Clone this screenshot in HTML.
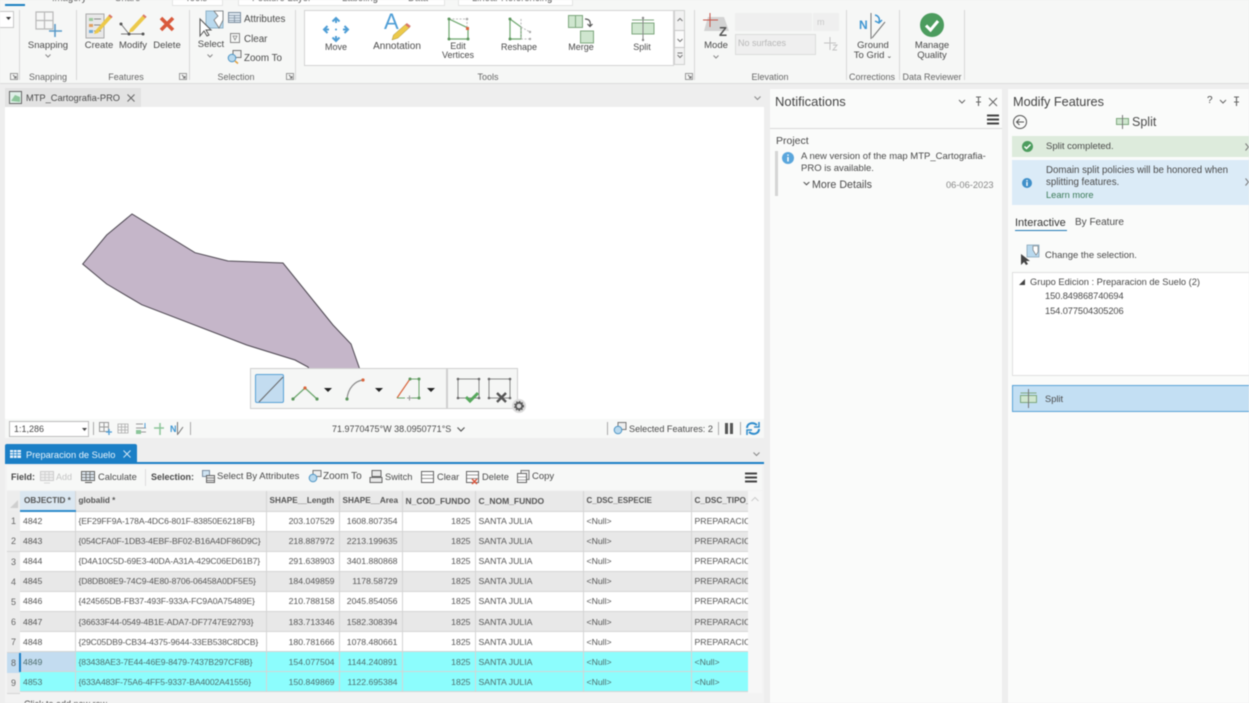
<!DOCTYPE html>
<html><head><meta charset="utf-8"><style>
html,body{margin:0;padding:0;width:1249px;height:703px;overflow:hidden;background:#eee}
#r{position:relative;width:1249px;height:703px;overflow:hidden;font-family:"Liberation Sans",sans-serif;font-size:9.5px;color:#4a4a4a;filter:blur(.45px);background:#eeeeee}
.a{position:absolute}
.t{position:absolute;white-space:nowrap;line-height:12px}
.c{transform:translateX(-50%);text-align:center}
.g{color:#666}
svg{position:absolute;overflow:visible}
.sep{position:absolute;width:1px;background:#d8d8d8}
table{position:absolute;border-collapse:collapse;table-layout:fixed;left:20px;top:491px;width:728px;font-size:8.7px;color:#555}
td,th{padding:0 3px;height:20.1px;box-sizing:border-box;white-space:nowrap;overflow:hidden;border-bottom:1px solid #d5d5d5;border-right:1px solid #d5d5d5;text-align:left;font-weight:normal}
th{background:#e9e9e9;height:20px;font-weight:bold;color:#555;font-size:8.2px}
td.n{text-align:right;padding-right:4px}
tr:nth-child(even) td{background:#ffffff}
tr:nth-child(odd) td{background:#e8e8e8}
tr.s td{background:#8cfdfd!important;color:#4e6e6e}
.gid{font-size:8.6px;letter-spacing:-.1px}
.rh{position:absolute;left:7px;width:13px;height:20px;text-align:center;line-height:20px;font-size:9px;color:#666;background:#ececec;border-bottom:1px solid #d5d5d5}
</style></head><body><div id="r">

<!-- ribbon -->
<div class="a" style="left:0;top:0;width:1249px;height:83px;background:#f6f7f6"></div>
<div class="a" style="left:0;top:83px;width:1249px;height:1px;background:#dcdcdc"></div>
<div class="a" style="left:172px;top:0;width:49px;height:5px;background:#fff;border:1px solid #e4e4e4;border-top:0"></div>
<div class="a" style="left:238px;top:0;width:205px;height:5px;background:#fff;border:1px solid #e4e4e4;border-top:0"></div>
<div class="a" style="left:458px;top:0;width:113px;height:5px;background:#fff;border:1px solid #e4e4e4;border-top:0"></div>
<div class="a" style="left:5px;top:4px;width:20px;height:2px;background:#1b7fc0"></div>
<div class="t" style="left:52px;top:-7px">Imagery</div><div class="t" style="left:115px;top:-7px">Share</div><div class="t" style="left:185px;top:-7px">Tools</div><div class="t" style="left:252px;top:-7px">Feature Layer</div><div class="t" style="left:342px;top:-7px">Labeling</div><div class="t" style="left:408px;top:-7px">Data</div><div class="t" style="left:472px;top:-7px">Linear Referencing</div>

<div class="a" style="left:-2px;top:11px;width:14px;height:15px;background:#fff;border:1px solid #c8c8c8"></div>
<svg style="left:6px;top:17px" width="5" height="3"><path d="M0 0h5L2.500 3z" fill="#333"/></svg>

<div class="sep" style="left:19px;top:10px;height:70px"></div>
<div class="sep" style="left:76px;top:10px;height:70px"></div>
<div class="sep" style="left:189px;top:10px;height:70px"></div>
<div class="sep" style="left:295px;top:10px;height:70px"></div>
<div class="sep" style="left:694px;top:10px;height:70px"></div>
<div class="sep" style="left:846px;top:10px;height:70px"></div>
<div class="sep" style="left:899px;top:10px;height:70px"></div>
<div class="sep" style="left:964px;top:10px;height:70px"></div>

<!-- Snapping -->
<svg style="left:35px;top:11px" width="28" height="26" fill="none"><path d="M1 1h17v17H1zM1 9.500h17M9.500 1v17" stroke="#b9b9b9" stroke-width="1.200"/><path d="M20 13v13M14 20h13" stroke="#5b9bc9" stroke-width="1.600"/></svg>
<div class="t c" style="left:48px;top:40px">Snapping</div>
<svg style="left:45px;top:54px" width="6" height="4" fill="none"><path d="M.5.500L3 3l2.500-2.500" stroke="#888"/></svg>
<div class="t c g" style="left:48px;top:71px;font-size:9px">Snapping</div>
<svg style="left:10px;top:73px" width="8" height="7" fill="none"><path d="M.5.500h7v6h-7z" stroke="#999"/><path d="M3 2l3 3M6 3v2H4" stroke="#777"/></svg>

<!-- Features -->
<svg style="left:85px;top:12px" width="28" height="26"><rect x="1" y="2" width="18" height="24" fill="#e8e8e8" stroke="#aaa"/><rect x="4" y="6" width="4" height="3" fill="#9cc89c"/><rect x="4" y="12" width="4" height="3" fill="#e0a060"/><rect x="4" y="18" width="4" height="3" fill="#6fa9d6"/><path d="M9 7h7M9 13h7M9 19h7" stroke="#888"/><path d="M10 19L24 3l3 2.500L13 21l-4 1z" fill="#ecc94a"/><path d="M24 3l3 2.500" stroke="#d9776a" stroke-width="2"/></svg>
<div class="t c" style="left:99px;top:40px">Create</div>
<svg style="left:119px;top:12px" width="28" height="24" fill="none"><path d="M2 12l8 10M2 22h22" stroke="#777"/><circle cx="2" cy="12" r="1.500" fill="#555"/><circle cx="10" cy="22" r="1.500" fill="#555"/><circle cx="24" cy="22" r="1.500" fill="#555"/><path d="M11 17L24 3l3 2.500L14 19.500l-4 1z" fill="#ecc94a"/><path d="M24 3l3 2.500" stroke="#d9776a" stroke-width="2"/></svg>
<div class="t c" style="left:133px;top:40px">Modify</div>
<svg style="left:159px;top:16px" width="16" height="16" fill="none"><path d="M2 2l12 12M14 2L2 14" stroke="#d95a3c" stroke-width="3.600"/></svg>
<div class="t c" style="left:167px;top:40px">Delete</div>
<div class="t c g" style="left:126px;top:71px;font-size:9px">Features</div>
<svg style="left:179px;top:73px" width="8" height="7" fill="none"><path d="M.5.500h7v6h-7z" stroke="#999"/><path d="M3 2l3 3M6 3v2H4" stroke="#777"/></svg>

<!-- Selection -->
<svg style="left:199px;top:10px" width="26" height="27"><rect x="7" y="1" width="17" height="17" fill="#b9d9ee" stroke="#8fb2c8"/><path d="M15 1h9v9l-4 8-5-8 4-4z" fill="#fff" stroke="#777" stroke-width=".8"/><path d="M1 9v17l4-5 3 5 2-1-3-5h5z" fill="#fff" stroke="#555"/></svg>
<div class="t c" style="left:211px;top:39px">Select</div>
<svg style="left:207px;top:54px" width="6" height="4" fill="none"><path d="M.5.500L3 3l2.500-2.500" stroke="#888"/></svg>
<svg style="left:228px;top:12px" width="13" height="11"><rect x=".5" y=".5" width="12" height="10" fill="#dfe9f1" stroke="#7d8ea0"/><path d="M1 3.500h11M1 6h11M1 8.500h11M6.500 3v7" stroke="#7d8ea0" stroke-width=".8"/></svg>
<div class="t" style="left:244px;top:14px;font-size:9.800px">Attributes</div>
<svg style="left:230px;top:33px" width="10" height="10" fill="none"><path d="M.5.500h9v9h-9z" stroke="#888"/><path d="M3 3h4L5 7z" stroke="#888" stroke-width=".8"/></svg>
<div class="t" style="left:244px;top:34px;font-size:9.800px">Clear</div>
<svg style="left:227px;top:50px" width="15" height="14" fill="none"><rect x="6" y=".5" width="8" height="7" fill="#eee" stroke="#777"/><circle cx="5" cy="8" r="3.800" fill="#b9d9ee" stroke="#4d94c4"/><path d="M8 11l3 2.500" stroke="#e0a040" stroke-width="1.500"/></svg>
<div class="t" style="left:244px;top:53px;font-size:9.800px">Zoom To</div>
<div class="t c g" style="left:236px;top:71px;font-size:9px">Selection</div>
<svg style="left:286px;top:73px" width="8" height="7" fill="none"><path d="M.5.500h7v6h-7z" stroke="#999"/><path d="M3 2l3 3M6 3v2H4" stroke="#777"/></svg>

<!-- Tools gallery -->
<div class="a" style="left:304px;top:10px;width:368px;height:54px;background:#fff;border:1px solid #d4d4d4"></div>
<svg style="left:323px;top:17px" width="26" height="25" fill="none" stroke="#4f9ed6" stroke-width="2"><path d="M13 1v5M13 19v5M1 12.500h5M20 12.500h5"/><path d="M9.500 4.500L13 1l3.500 3.500M9.500 20.500L13 24l3.500-3.500M4.500 9L1 12.500 4.500 16M21.500 9l3.500 3.500L21.500 16"/><path d="M12 12.500h2M13 11.500v2" stroke-width="1"/></svg>
<div class="t c" style="left:336px;top:41px;font-size:9px">Move</div>
<div class="t" style="left:384px;top:10px;font-size:22px;line-height:24px;color:#4f9ed6">A</div>
<svg style="left:391px;top:23px" width="20" height="18"><path d="M1 17l1.500-5L15 1l4 3L7 15z" fill="#ecc94a" stroke="#a58f3a" stroke-width=".5"/><path d="M15 1l4 3" stroke="#d9776a" stroke-width="2.500"/></svg>
<div class="t c" style="left:397px;top:41px;font-size:10px">Annotation</div>
<svg style="left:447px;top:17px" width="23" height="23" fill="none"><path d="M2 2v20h19V11z" stroke="#6ca66c" stroke-width="1.200"/><path d="M2 2h18v9" stroke="#aaa" stroke-dasharray="2 1.500" stroke-width=".8"/><circle cx="2" cy="2" r="1.500" fill="#5d965d"/><circle cx="20" cy="2" r="1.300" fill="#aaa"/><rect x="19" y="10" width="3" height="3" fill="#d9653c"/><circle cx="2" cy="22" r="1.500" fill="#5d965d"/><circle cx="21" cy="22" r="1.500" fill="#5d965d"/></svg>
<div class="t c" style="left:458px;top:42px;font-size:9px;line-height:9px">Edit<br>Vertices</div>
<svg style="left:509px;top:18px" width="24" height="22" fill="none"><path d="M1 1l11 8v12H1z" stroke="#6ca66c" stroke-width="1.200"/><path d="M12 9l9 5M12 21h10M12 1v20" stroke="#aaa" stroke-dasharray="2 1.500" stroke-width=".8"/><circle cx="1" cy="1" r="1.500" fill="#5d965d"/><circle cx="1" cy="21" r="1.500" fill="#5d965d"/><circle cx="21" cy="14" r="1.200" fill="#aaa"/><circle cx="21" cy="21" r="1.200" fill="#aaa"/></svg>
<div class="t c" style="left:519px;top:41px;font-size:9px">Reshape</div>
<svg style="left:568px;top:15px" width="27" height="27" fill="none"><rect x=".5" y=".5" width="14" height="12" fill="#cfe6cf" stroke="#7fa87f"/><path d="M7.500 1v12" stroke="#7fa87f"/><rect x="12.500" y="16" width="13" height="12" fill="#cfe6cf" stroke="#7fa87f"/><path d="M17 4c4 0 6 2 5 7M19.500 9l2.500 2.500 2.500-2.500" stroke="#555" stroke-width="1.200"/></svg>
<div class="t c" style="left:581px;top:41px;font-size:9px">Merge</div>
<svg style="left:631px;top:17px" width="23" height="24" fill="none"><rect x="1" y="6" width="22" height="11" fill="#cfe6cf" stroke="#7fa87f"/><path d="M1 3h22M12 1v22" stroke="#7fa87f"/><path d="M12 1v22" stroke="#888"/><circle cx="12" cy="1" r="1.200" fill="#888"/><circle cx="12" cy="23" r="1.200" fill="#888"/></svg>
<div class="t c" style="left:642px;top:41px;font-size:9px">Split</div>
<div class="a" style="left:674px;top:10px;width:11px;height:55px;background:#f2f2f2;border:1px solid #d0d0d0;box-sizing:border-box"></div>
<div class="a" style="left:674px;top:30px;width:11px;height:18px;background:#fbfbfb;border:1px solid #c8c8c8;box-sizing:border-box"></div>
<svg style="left:677px;top:18px" width="6" height="40" fill="none" stroke="#777"><path d="M.5 3L3 .5 5.500 3M.5 21L3 23.500 5.500 21M.5 35h5M.5 37L3 39.500 5.500 37"/></svg>
<div class="t c g" style="left:488px;top:71px;font-size:9px">Tools</div>
<svg style="left:685px;top:73px" width="8" height="7" fill="none"><path d="M.5.500h7v6h-7z" stroke="#999"/><path d="M3 2l3 3M6 3v2H4" stroke="#777"/></svg>

<!-- Elevation -->
<svg style="left:702px;top:13px" width="28" height="26"><path d="M6 4h16l5 14H2z" fill="#d3d3d3"/><path d="M1 7h15M8 0v14" stroke="#c7564a"/></svg>
<div class="t" style="left:719px;top:26px;font-size:13px;font-weight:bold;color:#555">Z</div>
<div class="t c" style="left:716px;top:40px">Mode</div>
<svg style="left:713px;top:55px" width="6" height="4" fill="none"><path d="M.5.500L3 3l2.500-2.500" stroke="#888"/></svg>
<div class="a" style="left:735px;top:13px;width:77px;height:18px;background:#efefef"></div>
<div class="a" style="left:813px;top:13px;width:26px;height:18px;background:#efefef"></div>
<div class="t" style="left:817px;top:16px;color:#c8c8c8;font-size:9px">m</div>
<div class="a" style="left:735px;top:34px;width:79px;height:19px;background:#efefef;border:1px solid #dcdcdc"></div>
<div class="t" style="left:738px;top:37px;color:#b8b8b8;font-size:9px">No surfaces</div>
<svg style="left:824px;top:36px" width="14" height="16" fill="none" stroke="#c2c2c2"><path d="M6 1v13M0 7h12M9 9h4l-4 5h4"/></svg>
<div class="t c g" style="left:770px;top:71px;font-size:9px">Elevation</div>

<!-- Corrections -->
<div class="t" style="left:859px;top:19px;font-size:12px;font-weight:bold;color:#3e96d2">N</div>
<svg style="left:870px;top:12px" width="17" height="28" fill="none"><path d="M1 1v26M2 26L15 10" stroke="#777"/><path d="M5 3c4 1 5 4 4 7M5 9l4 2 3-3" stroke="#3e96d2" stroke-width="1.500"/></svg>
<div class="t c" style="left:873px;top:40px;line-height:10px;padding-top:1px">Ground<br>To Grid<span style="font-size:7px"> ⌄</span></div>
<div class="t c g" style="left:872px;top:71px;font-size:9px">Corrections</div>

<!-- Data Reviewer -->
<svg style="left:920px;top:13px" width="24" height="24" fill="none"><circle cx="12" cy="12" r="12" fill="#4c9c5e"/><path d="M6 12.500l4.500 4.500L18 8" stroke="#fff" stroke-width="3"/></svg>
<div class="t c" style="left:932px;top:41px;line-height:10px">Manage<br>Quality</div>
<div class="t c g" style="left:932px;top:71px;font-size:9px">Data Reviewer</div>

<!-- Map pane -->
<div class="a" style="left:5px;top:88px;width:136px;height:19px;background:#e2e2e2"></div>
<svg style="left:9px;top:91px" width="13" height="13"><rect x=".5" y=".5" width="12" height="12" fill="#dff0e8" stroke="#666"/><path d="M2 10l4-6 5 2v5z" fill="#8cc59a"/></svg>
<div class="t" style="left:26px;top:92px;font-size:9.300px">MTP_Cartografia-PRO</div>
<svg style="left:127px;top:94px" width="8" height="8" fill="none" stroke="#666"><path d="M.5.500l7 7M7.500.500l-7 7"/></svg>
<svg style="left:754px;top:96px" width="7" height="4" fill="none" stroke="#888"><path d="M.5.500L3.500 3.500 6.500.500"/></svg>
<div class="a" style="left:5px;top:107px;width:759px;height:331px;background:#fff"></div>
<svg style="left:0;top:0" width="770" height="420"><path d="M132 214L106.700 235 82.700 264 106.700 284 141.700 304.700 246.700 345 295 360 308 367 318 385H365L359 367 351 344 333 325 283 263 228 261 195 252.700Z" fill="#c5b6c9" stroke="#4c4650" stroke-width="1"/></svg>

<!-- floating toolbar -->
<div class="a" style="left:250px;top:368px;width:268px;height:41px;background:#f5f6f5;border:1px solid #cfcfcf;box-sizing:border-box"></div>
<div class="a" style="left:446px;top:369px;width:2px;height:39px;background:#cfcfcf"></div>
<div class="a" style="left:255px;top:374px;width:29px;height:29px;background:#c3dcf0;border:1px solid #5aa2d6;border-radius:2px;box-sizing:border-box"></div>
<svg style="left:250px;top:368px" width="270" height="42" fill="none">
<path d="M9 34L33 9" stroke="#666" stroke-width="1"/>
<path d="M43 31L55 20 67 31" stroke="#6ca66c" stroke-width="1.200"/><circle cx="43" cy="31" r="1.600" fill="#5d965d"/><circle cx="67" cy="31" r="1.600" fill="#5d965d"/><circle cx="55" cy="20" r="1.600" fill="#d9653c"/>
<path d="M74 20h8l-4 4z" fill="#222"/>
<path d="M97 31C98 20 105 13 113 12" stroke="#888" stroke-width="1.200"/><circle cx="97" cy="31" r="1.600" fill="#5d965d"/><circle cx="113" cy="12" r="1.600" fill="#d9653c"/>
<path d="M125 20h8l-4 4z" fill="#222"/>
<path d="M147 30L160 11" stroke="#d9653c" stroke-width="1.200"/><path d="M147 30h8M160 11h9v19h-8" stroke="#6ca66c"/><path d="M157 30h5M159.500 27.500v5" stroke="#999"/><circle cx="160" cy="11" r="1.500" fill="#5d965d"/><circle cx="169" cy="11" r="1.500" fill="#5d965d"/><circle cx="169" cy="30" r="1.500" fill="#5d965d"/>
<path d="M177 20h8l-4 4z" fill="#222"/>
<path d="M208 11h21v19h-21z" stroke="#888"/><circle cx="208" cy="11" r="1.300" fill="#666"/><circle cx="229" cy="11" r="1.300" fill="#666"/><circle cx="208" cy="30" r="1.300" fill="#666"/><circle cx="229" cy="30" r="1.300" fill="#666"/>
<path d="M216 29l4 4 8-8" stroke="#56a85c" stroke-width="3"/>
<path d="M239 11h21v19h-21z" stroke="#888"/><circle cx="239" cy="11" r="1.300" fill="#666"/><circle cx="260" cy="11" r="1.300" fill="#666"/><circle cx="239" cy="30" r="1.300" fill="#666"/><circle cx="260" cy="30" r="1.300" fill="#666"/>
<path d="M247 25l9 9M256 25l-9 9" stroke="#555" stroke-width="2.400"/>
</svg>
<svg style="left:512px;top:399px" width="14" height="14"><circle cx="7" cy="7" r="7" fill="#dadada"/><circle cx="7" cy="7" r="3.200" fill="none" stroke="#555" stroke-width="1.800"/><circle cx="7" cy="7" r="4.500" fill="none" stroke="#555" stroke-width="1" stroke-dasharray="1.500 1.500"/></svg>

<!-- Map status bar -->
<div class="a" style="left:5px;top:419px;width:759px;height:19px;background:#f7f8f7"></div>
<div class="a" style="left:9px;top:421px;width:80px;height:16px;background:#fff;border:1px solid #bbb;box-sizing:border-box"></div>
<div class="t" style="left:14px;top:423px;font-size:9px">1:1,286</div>
<svg style="left:82px;top:428px" width="5" height="3"><path d="M0 0h5L2.500 3z" fill="#444"/></svg>
<div class="a" style="left:93px;top:422px;width:1px;height:13px;background:#aaa"></div>
<svg style="left:99px;top:422px" width="90" height="14" fill="none"><path d="M.5.500h9v9h-9zM.5 5h9M5 .5v9" stroke="#999"/><path d="M10 7v6M7 10h6" stroke="#4f9ed6" stroke-width="1.300"/><path d="M19 2h10v9H19zM19 5h10M19 8h10M22.500 2v9M26 2v9" stroke="#aaa" stroke-width=".8"/><path d="M37 2h7M37 6h10M37 10h10" stroke="#999"/><rect x="37" y="8" width="5" height="4" fill="#8cc59a"/><path d="M46 1v5" stroke="#4f9ed6"/><path d="M61 1v12M55 6h10" stroke="#8cc59a" stroke-width="1.500"/></svg>
<div class="t" style="left:170px;top:423px;color:#3e96d2;font-size:9px;font-weight:bold">N</div>
<svg style="left:177px;top:421px" width="7" height="15" fill="none"><path d="M.5 1v13M1 13l5-7" stroke="#777"/></svg>
<div class="a" style="left:190px;top:422px;width:1px;height:13px;background:#aaa"></div>
<div class="t" style="left:332px;top:423px;font-size:9px">71.9770475°W 38.0950771°S</div>
<svg style="left:457px;top:427px" width="8" height="5" fill="none" stroke="#555" stroke-width="1.200"><path d="M.5.500L4 4 7.500.500"/></svg>
<div class="a" style="left:607px;top:422px;width:1px;height:13px;background:#aaa"></div>
<svg style="left:613px;top:422px" width="14" height="13" fill="none"><rect x="5" y=".5" width="8" height="7" fill="#eee" stroke="#777"/><circle cx="5" cy="8" r="3.800" fill="#b9d9ee" stroke="#4d94c4"/></svg>
<div class="t" style="left:629px;top:423px;font-size:9.100px">Selected Features: 2</div>
<div class="a" style="left:718px;top:422px;width:1px;height:13px;background:#aaa"></div>
<div class="a" style="left:725px;top:423px;width:3px;height:11px;background:#555"></div>
<div class="a" style="left:730px;top:423px;width:3px;height:11px;background:#555"></div>
<div class="a" style="left:740px;top:422px;width:1px;height:13px;background:#aaa"></div>
<svg style="left:746px;top:421px" width="14" height="15" fill="none" stroke="#2f8ccc" stroke-width="2"><path d="M1 7c0-4 5-7 10-3M13 8c0 4-5 7-10 3"/><path d="M13 1v5H8M1 14V9h5" stroke-width="1.500"/></svg>

<!-- Table pane -->
<div class="a" style="left:5px;top:444px;width:132px;height:18px;background:#1b7fc6;border-radius:2px 2px 0 0"></div>
<svg style="left:10px;top:450px" width="11" height="8"><rect width="11" height="8" fill="#e8f2fa"/><path d="M0 2.500h11M0 5h11M3.500 0v8M7 0v8" stroke="#1b7fc6" stroke-width=".7"/></svg>
<div class="t" style="left:26px;top:449px;color:#e8f4fc;font-size:9.300px">Preparacion de Suelo</div>
<svg style="left:123px;top:450px" width="8" height="8" fill="none" stroke="#cfe6f6"><path d="M.5.500l7 7M7.500.500l-7 7"/></svg>
<div class="a" style="left:5px;top:462px;width:759px;height:2px;background:#1b7fc6"></div>
<svg style="left:753px;top:452px" width="7" height="4" fill="none" stroke="#888"><path d="M.5.500L3.500 3.500 6.500.500"/></svg>
<div class="a" style="left:5px;top:464px;width:759px;height:239px;background:#f3f3f3"></div>
<div class="a" style="left:7px;top:466px;width:755px;height:24px;background:#f7f8f7"></div>

<div class="t" style="left:11px;top:471px;font-weight:bold;font-size:9px">Field:</div>
<svg style="left:40px;top:471px" width="14" height="13" fill="none"><rect x=".5" y=".5" width="13" height="9" fill="#eee" stroke="#ccc"/><path d="M1 3.500h12M1 6.500h12M5 1v8M9 1v8M4 12h6" stroke="#ccc" stroke-width=".8"/></svg>
<div class="t" style="left:56px;top:471px;color:#c4c4c4;font-size:9px">Add</div>
<svg style="left:81px;top:471px" width="14" height="13" fill="none"><rect x=".5" y=".5" width="13" height="9" fill="#dfe9f1" stroke="#666"/><path d="M1 3.500h12M1 6.500h12M5 1v8M9 1v8" stroke="#666" stroke-width=".8"/><path d="M4 11.500h7" stroke="#555"/></svg>
<div class="t" style="left:98px;top:471px;font-size:9.300px">Calculate</div>
<div class="a" style="left:145px;top:469px;width:1px;height:17px;background:#ddd"></div>
<div class="t" style="left:151px;top:471px;font-weight:bold;font-size:9px">Selection:</div>
<svg style="left:202px;top:470px" width="13" height="14" fill="none"><rect x=".5" y=".5" width="7" height="6" fill="#cfe3f2" stroke="#7d8ea0"/><rect x="4.500" y="5.500" width="8" height="7" fill="#e8e8e8" stroke="#666"/><path d="M5 8h7M5 10.500h7" stroke="#666" stroke-width=".7"/></svg>
<div class="t" style="left:217px;top:471px;font-size:9.500px">Select By Attributes</div>
<svg style="left:308px;top:470px" width="14" height="14" fill="none"><rect x="5" y=".5" width="8" height="6" fill="#eee" stroke="#777"/><circle cx="5" cy="8" r="3.800" fill="#b9d9ee" stroke="#4d94c4"/></svg>
<div class="t" style="left:323px;top:471px;font-size:10px">Zoom To</div>
<svg style="left:369px;top:470px" width="14" height="14" fill="none"><rect x="3" y=".5" width="9" height="6" fill="#e8e8e8" stroke="#666"/><rect x="1" y="7.500" width="12" height="5" fill="#e8e8e8" stroke="#666"/></svg>
<div class="t" style="left:385px;top:471px;font-size:9.300px">Switch</div>
<svg style="left:421px;top:471px" width="13" height="12" fill="none"><rect x=".5" y=".5" width="12" height="11" fill="#fff" stroke="#666"/><path d="M1 4h11M1 7.500h11" stroke="#777" stroke-width=".8"/></svg>
<div class="t" style="left:437px;top:471px;font-size:9.300px">Clear</div>
<svg style="left:466px;top:471px" width="14" height="14" fill="none"><rect x=".5" y=".5" width="12" height="11" fill="#fff" stroke="#666"/><path d="M1 4h11M1 7.500h11" stroke="#777" stroke-width=".8"/><path d="M6 8l5 5M11 8l-5 5" stroke="#d9553c" stroke-width="1.500"/></svg>
<div class="t" style="left:482px;top:471px;font-size:9.300px">Delete</div>
<svg style="left:517px;top:470px" width="13" height="14" fill="none"><rect x="4" y=".5" width="8" height="9" fill="#eee" stroke="#777"/><rect x=".5" y="3.500" width="9" height="9" fill="#fff" stroke="#666"/><path d="M1 7h8M1 10h8" stroke="#888" stroke-width=".7"/></svg>
<div class="t" style="left:532px;top:471px;font-size:9.500px">Copy</div>
<svg style="left:745px;top:472px" width="12" height="11"><path d="M0 1.500h12M0 5.500h12M0 9.500h12" stroke="#444" stroke-width="2"/></svg>

<!-- table row headers -->
<div class="rh" style="top:491px;background:#ededed"><svg style="left:3px;top:9px" width="8" height="8"><path d="M8 0v8H0z" fill="#cfcfcf"/></svg></div>
<div class="rh" style="top:511px">1</div><div class="rh" style="top:531px">2</div><div class="rh" style="top:551.500px">3</div><div class="rh" style="top:571.500px">4</div><div class="rh" style="top:592px">5</div><div class="rh" style="top:612px">6</div><div class="rh" style="top:632px">7</div><div class="rh" style="top:652.500px;background:#c3dcf0">8</div><div class="rh" style="top:672.500px">9</div>

<table>
<colgroup><col style="width:55px"><col style="width:191px"><col style="width:73px"><col style="width:63px"><col style="width:73px"><col style="width:108px"><col style="width:108px"><col style="width:57px"></colgroup>
<tr><th style="background:#dbe7f1;border-bottom:2px solid #2f8ccc;padding-left:4px">OBJECTID *</th><th>globalid *</th><th>SHAPE__Length</th><th>SHAPE__Area</th><th style="font-size:8.500px">N_COD_FUNDO</th><th style="font-size:8.500px">C_NOM_FUNDO</th><th style="font-size:7.900px">C_DSC_ESPECIE</th><th>C_DSC_TIPO_</th></tr>
<tr><td>4842</td><td class="gid">{EF29FF9A-178A-4DC6-801F-83850E6218FB}</td><td class="n">203.107529</td><td class="n">1608.807354</td><td class="n">1825</td><td>SANTA JULIA</td><td>&lt;Null&gt;</td><td>PREPARACIO</td></tr>
<tr><td>4843</td><td class="gid">{054CFA0F-1DB3-4EBF-BF02-B16A4DF86D9C}</td><td class="n">218.887972</td><td class="n">2213.199635</td><td class="n">1825</td><td>SANTA JULIA</td><td>&lt;Null&gt;</td><td>PREPARACIO</td></tr>
<tr><td>4844</td><td class="gid">{D4A10C5D-69E3-40DA-A31A-429C06ED61B7}</td><td class="n">291.638903</td><td class="n">3401.880868</td><td class="n">1825</td><td>SANTA JULIA</td><td>&lt;Null&gt;</td><td>PREPARACIO</td></tr>
<tr><td>4845</td><td class="gid">{D8DB08E9-74C9-4E80-8706-06458A0DF5E5}</td><td class="n">184.049859</td><td class="n">1178.58729</td><td class="n">1825</td><td>SANTA JULIA</td><td>&lt;Null&gt;</td><td>PREPARACIO</td></tr>
<tr><td>4846</td><td class="gid">{424565DB-FB37-493F-933A-FC9A0A75489E}</td><td class="n">210.788158</td><td class="n">2045.854056</td><td class="n">1825</td><td>SANTA JULIA</td><td>&lt;Null&gt;</td><td>PREPARACIO</td></tr>
<tr><td>4847</td><td class="gid">{36633F44-0549-4B1E-ADA7-DF7747E92793}</td><td class="n">183.713346</td><td class="n">1582.308394</td><td class="n">1825</td><td>SANTA JULIA</td><td>&lt;Null&gt;</td><td>PREPARACIO</td></tr>
<tr><td>4848</td><td class="gid">{29C05DB9-CB34-4375-9644-33EB538C8DCB}</td><td class="n">180.781666</td><td class="n">1078.480661</td><td class="n">1825</td><td>SANTA JULIA</td><td>&lt;Null&gt;</td><td>PREPARACIO</td></tr>
<tr class="s"><td style="background:#c3dcf0!important">4849</td><td class="gid">{83438AE3-7E44-46E9-8479-7437B297CF8B}</td><td class="n">154.077504</td><td class="n">1144.240891</td><td class="n">1825</td><td>SANTA JULIA</td><td>&lt;Null&gt;</td><td>&lt;Null&gt;</td></tr>
<tr class="s"><td>4853</td><td class="gid">{633A483F-75A6-4FF5-9337-BA4002A41556}</td><td class="n">150.849869</td><td class="n">1122.695384</td><td class="n">1825</td><td>SANTA JULIA</td><td>&lt;Null&gt;</td><td>&lt;Null&gt;</td></tr>
</table>
<div class="a" style="left:19px;top:653px;width:2px;height:19px;background:#1b7fc6"></div>
<div class="a" style="left:748px;top:491px;width:14px;height:202px;background:#f7f7f7"></div>
<svg style="left:751px;top:497px" width="8" height="5" fill="none" stroke="#ccc"><path d="M.5 4L4 .5 7.500 4"/></svg>
<div class="t" style="left:24px;top:698px;font-size:9px">Click to add new row.</div>

<!-- Notifications -->
<div class="a" style="left:770px;top:89px;width:232px;height:614px;background:#fafbfa"></div>
<div class="a" style="left:770px;top:128px;width:232px;height:1px;background:#d9d9d9"></div>
<div class="t" style="left:775px;top:95px;font-size:13px;line-height:14px;color:#444">Notifications</div>
<svg style="left:959px;top:97px" width="40" height="10" fill="none" stroke="#666"><path d="M0 3l3 3 3-3"/><path d="M17 0h5M19.500 0v5M17 5h5M19.500 5v4" stroke-width="1.100"/><path d="M30 1l8 8M38 1l-8 8"/></svg>
<svg style="left:987px;top:114px" width="12" height="11"><path d="M0 1.500h12M0 5.500h12M0 9.500h12" stroke="#444" stroke-width="2"/></svg>
<div class="t" style="left:776px;top:135px;font-size:10.500px">Project</div>
<div class="a" style="left:775px;top:151px;width:3px;height:45px;background:#d5d5d5"></div>
<svg style="left:782px;top:152px" width="12" height="12"><circle cx="6" cy="6" r="6" fill="#5aa6dc"/><path d="M6 5v4.500M6 2.500v1.300" stroke="#fff" stroke-width="1.500"/></svg>
<div class="t" style="left:801px;top:151px;font-size:9.500px">A new version of the map MTP_Cartografia-</div>
<div class="t" style="left:801px;top:163px;font-size:9.500px">PRO is available.</div>
<svg style="left:803px;top:182px" width="7" height="4" fill="#555"><path d="M0 0l3.500 3.500L7 0H5.500L3.500 2 1.500 0z"/></svg>
<div class="t" style="left:812px;top:179px;font-size:10.700px">More Details</div>
<div class="t g" style="left:946px;top:179px;font-size:9.300px;color:#888">06-06-2023</div>

<!-- Modify Features -->
<div class="a" style="left:1008px;top:89px;width:241px;height:614px;background:#fafbfa"></div>
<div class="t" style="left:1013px;top:95px;font-size:12.700px;line-height:14px;color:#444">Modify Features</div>
<div class="t" style="left:1207px;top:95px;font-size:10px">?</div>
<svg style="left:1220px;top:97px" width="28" height="10" fill="none" stroke="#666"><path d="M0 3l3 3 3-3"/><path d="M14 0h5M16.500 0v5M14 5h5M16.500 5v4" stroke-width="1.100"/></svg>
<svg style="left:1013px;top:115px" width="14" height="14" fill="none" stroke="#555"><circle cx="7" cy="7" r="6.500"/><path d="M11 7H3.500M6.500 4L3.500 7l3 3"/></svg>
<svg style="left:1116px;top:115px" width="13" height="14" fill="none"><rect x=".5" y="3.500" width="12" height="6" fill="#cfe6cf" stroke="#7fa87f"/><path d="M6.500 0v14" stroke="#777"/></svg>
<div class="t" style="left:1132px;top:115px;font-size:12.500px;line-height:14px">Split</div>
<div class="a" style="left:1012px;top:136px;width:237px;height:21px;background:#ddebdc"></div>
<svg style="left:1022px;top:141px" width="11" height="11" fill="none"><circle cx="5.500" cy="5.500" r="5.500" fill="#4c9c5e"/><path d="M2.500 5.500l2 2 4-4" stroke="#fff" stroke-width="1.500"/></svg>
<div class="t" style="left:1046px;top:141px;font-size:9.500px">Split completed.</div>
<svg style="left:1245px;top:143px" width="4" height="8" fill="none" stroke="#777"><path d="M.5.500L3.500 4 .5 7.500"/></svg>
<div class="a" style="left:1012px;top:160px;width:237px;height:45px;background:#dbebf7"></div>
<svg style="left:1022px;top:178px" width="10" height="10"><circle cx="5" cy="5" r="5" fill="#3f8fc9"/><path d="M5 4v4M5 2v1.300" stroke="#fff" stroke-width="1.400"/></svg>
<div class="t" style="left:1046px;top:165px;font-size:9.700px">Domain split policies will be honored when</div>
<div class="t" style="left:1046px;top:177px;font-size:9.700px">splitting features.</div>
<div class="t" style="left:1046px;top:189px;font-size:9.300px;color:#3c7a58">Learn more</div>
<svg style="left:1245px;top:178px" width="4" height="8" fill="none" stroke="#777"><path d="M.5.500L3.500 4 .5 7.500"/></svg>

<div class="t" style="left:1015px;top:216.500px;font-size:11px;color:#333">Interactive</div>
<div class="a" style="left:1015px;top:230px;width:52px;height:1px;background:#2179b5"></div>
<div class="t" style="left:1075px;top:216.500px;font-size:10px">By Feature</div>
<svg style="left:1021px;top:245px" width="18" height="20"><rect x="6" y="0" width="12" height="12" fill="#b9d9ee" stroke="#7f9db2" stroke-width=".7"/><path d="M12 1h5v6l-2 3-3-5z" fill="#fff" stroke="#666" stroke-width=".6"/><path d="M0 9v11l3-3 2 3 2-1-2-3h4z" fill="#444"/></svg>
<div class="t" style="left:1045px;top:249.500px;font-size:9.500px">Change the selection.</div>
<div class="a" style="left:1012px;top:272px;width:237px;height:104px;background:#fff;border:1px solid #e0e0e0;box-sizing:border-box;border-right:0"></div>
<svg style="left:1019px;top:279px" width="6" height="6"><path d="M6 0v6H0z" fill="#444"/></svg>
<div class="t" style="left:1030px;top:276px;font-size:9.300px">Grupo Edicion : Preparacion de Suelo (2)</div>
<div class="t" style="left:1045px;top:290px;font-size:9.300px;letter-spacing:-.1px">150.849868740694</div>
<div class="t" style="left:1045px;top:305px;font-size:9.300px;letter-spacing:-.1px">154.077504305206</div>
<div class="a" style="left:1012px;top:385px;width:237px;height:27px;background:#c3dff3;border:1px solid #5aa2d6;box-sizing:border-box;border-right:0"></div>
<svg style="left:1020px;top:389px" width="17" height="19" fill="none"><rect x=".5" y="6.500" width="16" height="7" fill="#cfe6cf" stroke="#7fa87f"/><path d="M.5 4h16" stroke="#7fa87f"/><path d="M8.500 0v19" stroke="#777"/></svg>
<div class="t" style="left:1045px;top:393px;font-size:9.300px">Split</div>

</div></body></html>
